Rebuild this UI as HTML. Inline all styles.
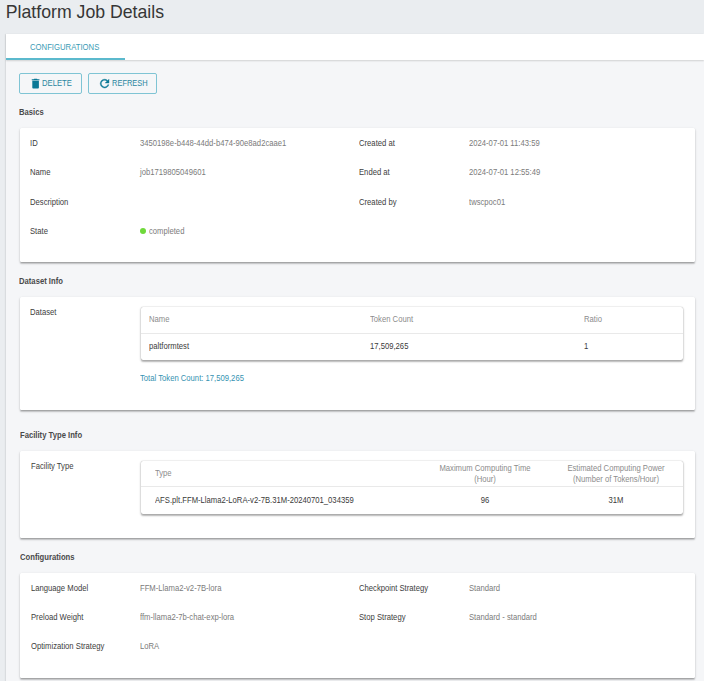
<!DOCTYPE html>
<html><head><meta charset="utf-8">
<style>
html,body{margin:0;padding:0;}
body{width:704px;height:681px;overflow:hidden;position:relative;background:#eaedf0;font-family:"Liberation Sans",sans-serif;}
.a{position:absolute;}
.t{position:absolute;white-space:nowrap;font-size:8.8px;line-height:10px;transform-origin:0 0;}
#panel{left:6px;top:34px;width:698px;height:647px;background:#f5f6f8;box-shadow:-1px 0 1px rgba(0,0,0,0.07);}
#tabbar{left:6px;top:33.7px;width:698px;height:26.7px;background:#fff;box-shadow:0 1px 1.5px rgba(0,0,0,0.15),0 -0.5px 1px rgba(0,0,0,0.03);}
#tabline{left:6px;top:58.4px;width:118.5px;height:2px;background:#5bb9cd;}
.btn{position:absolute;top:73px;height:19px;border:1px solid #7fc4d4;border-radius:2px;}
.card{position:absolute;left:20px;width:674.5px;background:#fff;border-radius:1.5px;box-shadow:0 1px 2.5px rgba(0,0,0,0.17),0 1.5px 1.5px rgba(0,0,0,0.16),0 2px 1px -1px rgba(0,0,0,0.10);}
.tbl{position:absolute;background:#fff;border-radius:2px;box-shadow:0 1px 3px rgba(0,0,0,0.2),0 1.5px 1.5px rgba(0,0,0,0.2),0 0 1px rgba(0,0,0,0.32);}
.sep{position:absolute;left:0;right:0;height:1px;background:#e9e9e9;}
</style></head>
<body>
<div class="t" style="left:5.8px;top:1.70px;color:#363636;font-size:17.7px;line-height:20px;">Platform Job Details</div>
<div id="panel" class="a"></div>
<div id="tabbar" class="a"></div>
<div id="tabline" class="a"></div>
<div class="t" style="left:30.2px;top:41.80px;color:#3a9bb5;font-size:9.2px;transform:scaleX(0.84);">CONFIGURATIONS</div>
<div class="btn" style="left:19px;width:61px;"></div>
<svg class="a" style="left:28.8px;top:76.9px;" width="13.2" height="13.2" viewBox="0 0 24 24"><path fill="#0b7896" d="M6 19c0 1.1.9 2 2 2h8c1.1 0 2-.9 2-2V7H6v12zM19 4h-3.5l-1-1h-5l-1 1H5v2h14V4z"/></svg>
<div class="t" style="left:42.3px;top:77.80px;color:#2b87a0;transform:scaleX(0.872);">DELETE</div>
<div class="btn" style="left:88px;width:67px;"></div>
<svg class="a" style="left:97.9px;top:76.7px;" width="13.2" height="13.2" viewBox="0 0 24 24"><path fill="#0b7896" stroke="#0b7896" stroke-width="0.7" d="M17.65 6.35C16.2 4.9 14.21 4 12 4c-4.42 0-7.99 3.58-7.99 8s3.57 8 7.99 8c3.73 0 6.84-2.55 7.73-6h-2.08c-.82 2.33-3.04 4-5.65 4-3.31 0-6-2.69-6-6s2.69-6 6-6c1.66 0 3.14.69 4.22 1.78L13 11h7V4l-2.35 2.35z"/></svg>
<div class="t" style="left:111.6px;top:77.80px;color:#2b87a0;transform:scaleX(0.85);">REFRESH</div>
<div class="t" style="left:19.3px;top:106.90px;color:#4a4a4a;font-size:9.2px;font-weight:bold;transform:scaleX(0.835);">Basics</div>
<div class="card" style="top:127.5px;height:134.4px;"></div>
<div class="t" style="left:30px;top:138.30px;color:#3d3d3d;transform:scaleX(0.872);">ID</div>
<div class="t" style="left:140px;top:138.30px;color:#7b7b7b;transform:scaleX(0.872);">3450198e-b448-44dd-b474-90e8ad2caae1</div>
<div class="t" style="left:359.2px;top:138.30px;color:#3d3d3d;transform:scaleX(0.872);">Created at</div>
<div class="t" style="left:468.6px;top:138.30px;color:#7b7b7b;transform:scaleX(0.872);">2024-07-01 11:43:59</div>
<div class="t" style="left:30px;top:167.30px;color:#3d3d3d;transform:scaleX(0.872);">Name</div>
<div class="t" style="left:140px;top:167.30px;color:#7b7b7b;transform:scaleX(0.872);">job1719805049601</div>
<div class="t" style="left:359.2px;top:167.30px;color:#3d3d3d;transform:scaleX(0.872);">Ended at</div>
<div class="t" style="left:468.6px;top:167.30px;color:#7b7b7b;transform:scaleX(0.872);">2024-07-01 12:55:49</div>
<div class="t" style="left:30px;top:196.50px;color:#3d3d3d;transform:scaleX(0.872);">Description</div>
<div class="t" style="left:359.2px;top:196.50px;color:#3d3d3d;transform:scaleX(0.872);">Created by</div>
<div class="t" style="left:468.6px;top:196.50px;color:#7b7b7b;transform:scaleX(0.872);">twscpoc01</div>
<div class="t" style="left:30px;top:225.80px;color:#3d3d3d;transform:scaleX(0.872);">State</div>
<div class="a" style="left:140.2px;top:227.7px;width:6px;height:6px;border-radius:50%;background:#6fd93a;"></div>
<div class="t" style="left:148.6px;top:225.80px;color:#7b7b7b;transform:scaleX(0.872);">completed</div>
<div class="t" style="left:19.3px;top:276.00px;color:#4a4a4a;font-size:9.2px;font-weight:bold;transform:scaleX(0.835);">Dataset Info</div>
<div class="card" style="top:296.9px;height:112.7px;"></div>
<div class="t" style="left:30.3px;top:307.00px;color:#3d3d3d;transform:scaleX(0.872);">Dataset</div>
<div class="tbl" style="left:140.7px;top:307px;width:542.6px;height:52.7px;"><div class="sep" style="top:26px;"></div></div>
<div class="t" style="left:149px;top:314.00px;color:#8c8c8c;transform:scaleX(0.872);">Name</div>
<div class="t" style="left:370px;top:314.00px;color:#8c8c8c;transform:scaleX(0.872);">Token Count</div>
<div class="t" style="left:584px;top:314.00px;color:#8c8c8c;transform:scaleX(0.872);">Ratio</div>
<div class="t" style="left:149px;top:341.00px;color:#3a3a3a;transform:scaleX(0.872);">paltformtest</div>
<div class="t" style="left:370px;top:341.00px;color:#3a3a3a;transform:scaleX(0.872);">17,509,265</div>
<div class="t" style="left:584px;top:341.00px;color:#3a3a3a;transform:scaleX(0.872);">1</div>
<div class="t" style="left:139.8px;top:373.00px;color:#3592b1;transform:scaleX(0.872);">Total Token Count: 17,509,265</div>
<div class="t" style="left:20px;top:429.70px;color:#4a4a4a;font-size:9.2px;font-weight:bold;transform:scaleX(0.835);">Facility Type Info</div>
<div class="card" style="top:450.7px;height:87.5px;"></div>
<div class="t" style="left:30.7px;top:460.90px;color:#3d3d3d;transform:scaleX(0.872);">Facility Type</div>
<div class="tbl" style="left:141px;top:461.2px;width:542.4px;height:52.6px;"><div class="sep" style="top:25px;"></div></div>
<div class="t" style="left:155.4px;top:468.30px;color:#8c8c8c;transform:scaleX(0.872);">Type</div>
<div class="t" style="left:415px;top:462.50px;color:#8c8c8c;width:140px;text-align:center;transform-origin:50% 0;transform:scaleX(0.872);">Maximum Computing Time</div>
<div class="t" style="left:415px;top:473.80px;color:#8c8c8c;width:140px;text-align:center;transform-origin:50% 0;transform:scaleX(0.872);">(Hour)</div>
<div class="t" style="left:546.3px;top:462.50px;color:#8c8c8c;width:140px;text-align:center;transform-origin:50% 0;transform:scaleX(0.872);">Estimated Computing Power</div>
<div class="t" style="left:546.3px;top:473.80px;color:#8c8c8c;width:140px;text-align:center;transform-origin:50% 0;transform:scaleX(0.872);">(Number of Tokens/Hour)</div>
<div class="t" style="left:155.4px;top:494.80px;color:#3a3a3a;transform:scaleX(0.872);">AFS.plt.FFM-Llama2-LoRA-v2-7B.31M-20240701_034359</div>
<div class="t" style="left:415px;top:494.80px;color:#3a3a3a;width:140px;text-align:center;transform-origin:50% 0;transform:scaleX(0.872);">96</div>
<div class="t" style="left:546.3px;top:494.80px;color:#3a3a3a;width:140px;text-align:center;transform-origin:50% 0;transform:scaleX(0.872);">31M</div>
<div class="t" style="left:20px;top:552.40px;color:#4a4a4a;font-size:9.2px;font-weight:bold;transform:scaleX(0.835);">Configurations</div>
<div class="card" style="top:572.7px;height:105.1px;"></div>
<div class="t" style="left:30.7px;top:583.20px;color:#3d3d3d;transform:scaleX(0.872);">Language Model</div>
<div class="t" style="left:140.3px;top:583.20px;color:#7b7b7b;transform:scaleX(0.872);">FFM-Llama2-v2-7B-lora</div>
<div class="t" style="left:359.2px;top:583.20px;color:#3d3d3d;transform:scaleX(0.872);">Checkpoint Strategy</div>
<div class="t" style="left:468.8px;top:583.20px;color:#7b7b7b;transform:scaleX(0.872);">Standard</div>
<div class="t" style="left:30.7px;top:612.10px;color:#3d3d3d;transform:scaleX(0.872);">Preload Weight</div>
<div class="t" style="left:140.3px;top:612.10px;color:#7b7b7b;transform:scaleX(0.872);">ffm-llama2-7b-chat-exp-lora</div>
<div class="t" style="left:359.2px;top:612.10px;color:#3d3d3d;transform:scaleX(0.872);">Stop Strategy</div>
<div class="t" style="left:468.8px;top:612.10px;color:#7b7b7b;transform:scaleX(0.872);">Standard - standard</div>
<div class="t" style="left:30.7px;top:641.00px;color:#3d3d3d;transform:scaleX(0.872);">Optimization Strategy</div>
<div class="t" style="left:140.3px;top:641.00px;color:#7b7b7b;transform:scaleX(0.872);">LoRA</div>
</body></html>
